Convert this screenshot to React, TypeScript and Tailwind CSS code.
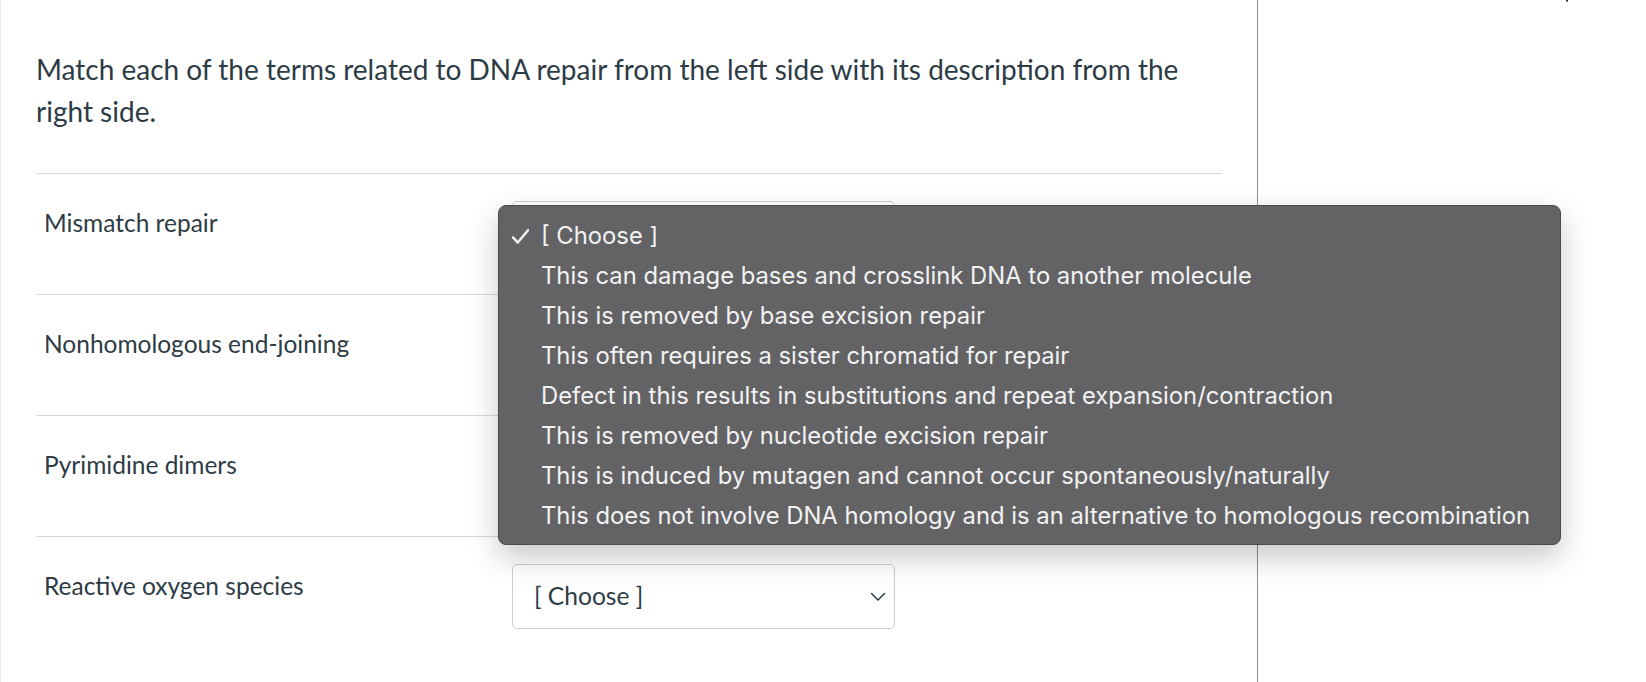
const terms = [
  'Mismatch repair',
  'Nonhomologous end-joining',
  'Pyrimidine dimers',
  'Reactive oxygen species',
];

const options = [
  'This can damage bases and crosslink DNA to another molecule',
  'This is removed by base excision repair',
  'This often requires a sister chromatid for repair',
  'Defect in this results in substitutions and repeat expansion/contraction',
  'This is removed by nucleotide excision repair',
  'This is induced by mutagen and cannot occur spontaneously/naturally',
  'This does not involve DNA homology and is an alternative to homologous recombination',
];

function SelectBox({ open = false }: { open?: boolean }) {
  return (
    <div className="relative w-[383px]">
      <div className="flex h-[65px] items-center justify-between rounded-[5px] border border-[#c7cdd1] bg-white pl-[21px] pr-[6px]">
        <span className="text-[24.6px] text-[#2d3b45]">[ Choose ]</span>
        <svg width="16" height="10" viewBox="0 0 16 10" fill="none" className="mr-[2px]">
          <path d="M1.5 1.5 L8 8 L14.5 1.5" stroke="#2d3b45" strokeWidth="1.5" strokeLinecap="round" strokeLinejoin="round" />
        </svg>
      </div>
      {open && <OptionMenu />}
    </div>
  );
}

function OptionMenu() {
  return (
    <div
      className="absolute left-[-14px] top-[4px] z-20 w-[1063px] rounded-[8px] border border-[#4b4b4d] bg-[#636366] pt-[10px] pb-[8px] shadow-[0_12px_30px_rgba(0,0,0,0.22)]"
      style={{ fontFamily: 'Inter, "Noto Sans", sans-serif' }}
    >
      <div className="flex h-[40px] items-center text-[23.8px] text-[#f2f2f2]">
        <span className="flex w-[42px] justify-center pl-[1px]">
          <svg width="19" height="17" viewBox="0 0 19 17" fill="none">
            <path d="M2 9.4 L6.8 14.6 L17 2.2" stroke="#f2f2f2" strokeWidth="2.4" strokeLinecap="round" strokeLinejoin="round" />
          </svg>
        </span>
        <span>[ Choose ]</span>
      </div>
      {options.map((o) => (
        <div key={o} className="flex h-[40px] items-center whitespace-nowrap pl-[42px] text-[23.8px] text-[#f2f2f2]">
          {o}
        </div>
      ))}
    </div>
  );
}

export default function App() {
  return (
    <div
      className="flex h-[682px] w-full overflow-hidden bg-white text-[#2d3b45]"
      style={{ fontFamily: 'Lato, "Open Sans", sans-serif' }}
    >
      <div className="w-[1258px] shrink-0 border-l border-r border-l-[#ececec] border-r-[#8f8f8f] pl-[35px] pr-[35px]">
        <p className="pt-[48px] text-[28px] leading-[42px]">
          Match each of the terms related to DNA repair from the left side with its description from the
          right side.
        </p>
        <div className="mt-[41px]">
          {terms.map((t, i) => (
            <div key={t} className="flex border-t border-[#d6dadd] pt-[27px] pb-[28px]">
              <div className="w-[476px] shrink-0 pl-[8px] pt-[4px] text-[24.5px]">{t}</div>
              <SelectBox open={i === 0} />
            </div>
          ))}
        </div>
      </div>
      <div className="relative flex-1">
        <div className="absolute left-[308px] top-[-2px] h-[4px] w-[2px] rounded-full bg-[#2d3b45]" />
      </div>
    </div>
  );
}
